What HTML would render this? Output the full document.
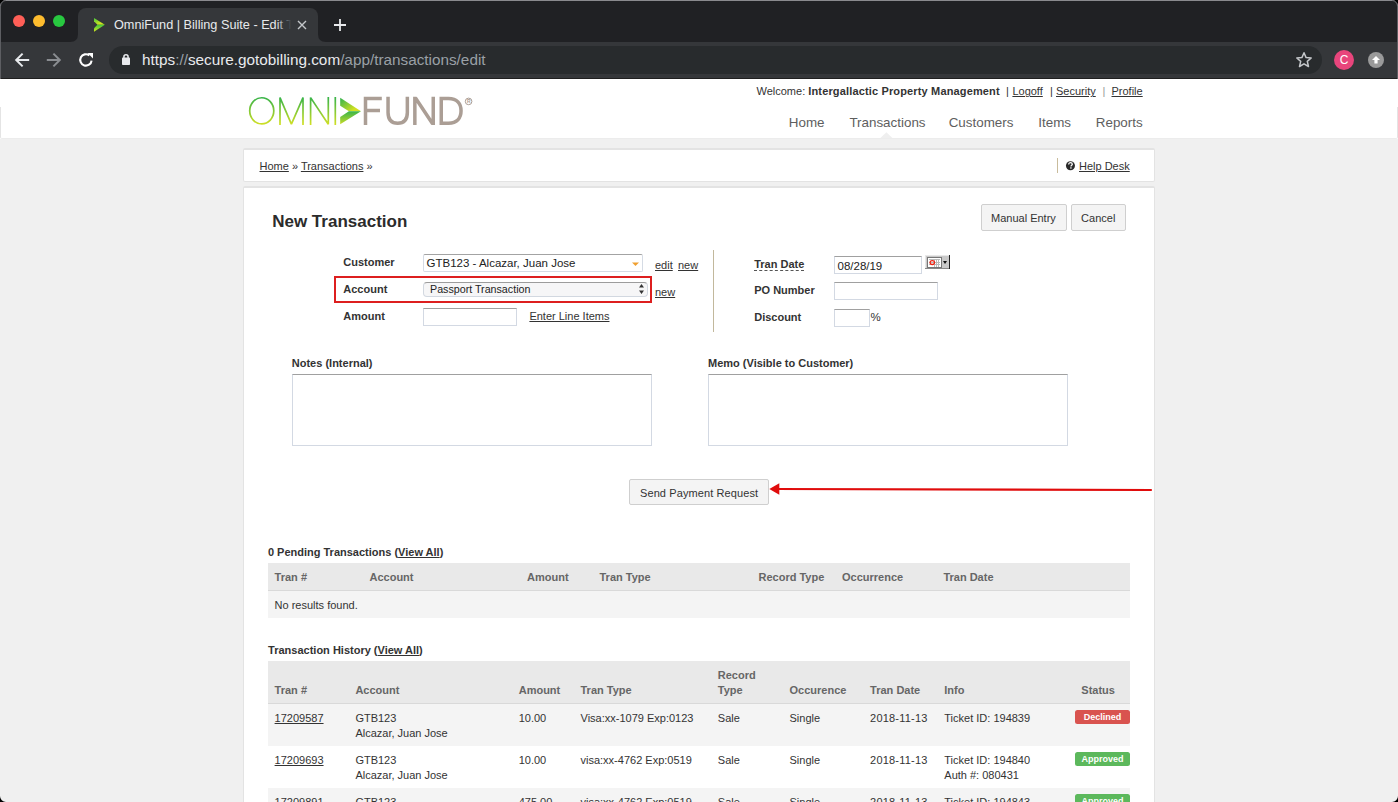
<!DOCTYPE html>
<html><head><meta charset="utf-8">
<style>
*{box-sizing:border-box;margin:0;padding:0}
html,body{width:1398px;height:802px;overflow:hidden;background:#f0f0f0;font-family:"Liberation Sans",sans-serif;font-size:11px;color:#333}
.a{position:absolute;white-space:nowrap}
#tabs{position:absolute;left:0;top:0;width:1398px;height:42px;background:#202124}
#tab{position:absolute;left:78px;top:8px;width:240px;height:34px;background:#35373a;border-radius:8px 8px 0 0}
#toolbar{position:absolute;left:0;top:42px;width:1398px;height:37px;background:#35373a;border-bottom:1px solid #1f1f1f}
#omni{position:absolute;left:109px;top:46px;width:1213px;height:28px;background:#282b2d;border-radius:14px}
#header{position:absolute;left:0;top:79px;width:1398px;height:60px;background:#fff}
.box{position:absolute;background:#fff;border:1px solid #e2e2e2;border-radius:2px}
u,.u{text-decoration:underline}
b{font-weight:bold}
.btn{position:absolute;background:#f4f4f4;border:1px solid #cfcfcf;border-radius:2px;text-align:center;color:#333}
.lbl{position:absolute;font-weight:bold;color:#333;white-space:nowrap}
.inp{position:absolute;background:#fff;border:1px solid #d3d9e3;border-top-color:#9a9a9a}
</style></head><body>
<!-- browser chrome -->
<div id="tabs"></div>

<div class="a" style="left:13px;top:15px;width:12px;height:12px;border-radius:50%;background:#ff5f57"></div>
<div class="a" style="left:33px;top:15px;width:12px;height:12px;border-radius:50%;background:#febc2e"></div>
<div class="a" style="left:53px;top:15px;width:12px;height:12px;border-radius:50%;background:#28c840"></div>
<div id="tab"></div>
<svg class="a" style="left:70px;top:34px" width="8" height="8"><path d="M0 8 Q8 8 8 0 V8Z" fill="#35373a"/></svg>
<svg class="a" style="left:318px;top:34px" width="8" height="8"><path d="M8 8 Q0 8 0 0 V8Z" fill="#35373a"/></svg>
<svg class="a" style="left:93px;top:17px" width="13" height="16" viewBox="0 0 13 16">
<defs><linearGradient id="fg1" gradientUnits="userSpaceOnUse" x1="1" y1="1" x2="5" y2="8"><stop offset="0" stop-color="#46c83c"/><stop offset="1" stop-color="#d2e41e"/></linearGradient>
<linearGradient id="fg2" gradientUnits="userSpaceOnUse" x1="0" y1="8" x2="0" y2="15"><stop offset="0" stop-color="#46c83c"/><stop offset="1" stop-color="#d7e81c"/></linearGradient></defs>
<path d="M1 1L11.85 7.8H4.4L1 4.3Z" fill="url(#fg1)"/><path d="M4.4 7.8H11.85L1 14.7V11.3Z" fill="url(#fg2)"/></svg>
<div class="a" style="left:114px;top:17px;font-size:12.7px;color:#e8eaed;width:178px;overflow:hidden;line-height:17px">OmniFund | Billing Suite - Edit Transaction</div>
<div class="a" style="left:276px;top:14px;width:18px;height:20px;background:linear-gradient(90deg,rgba(53,55,58,0),#35373a 85%)"></div>
<svg class="a" style="left:297px;top:20px" width="10" height="10"><path d="M1 1L9 9M9 1L1 9" stroke="#c4c7ca" stroke-width="1.4"/></svg>
<svg class="a" style="left:333px;top:18px" width="14" height="14"><path d="M7 1V13M1 7H13" stroke="#e8eaed" stroke-width="1.8"/></svg>
<div id="toolbar"></div>
<svg class="a" style="left:14px;top:52px" width="16" height="16" viewBox="0 0 16 16"><path d="M15.2 8H2.5M8.6 1.6L2.2 8L8.6 14.4" fill="none" stroke="#e8eaed" stroke-width="2"/></svg>
<svg class="a" style="left:46px;top:52px" width="16" height="16" viewBox="0 0 16 16"><path d="M0.8 8H13.5M7.4 1.6L13.8 8L7.4 14.4" fill="none" stroke="#8a8d91" stroke-width="2"/></svg>
<svg class="a" style="left:78px;top:52px" width="16" height="16" viewBox="0 0 16 16"><path d="M13.6 8.6A5.7 5.7 0 1 1 11.4 3.4" fill="none" stroke="#fff" stroke-width="2.1"/><path d="M9.6 1H15V6.4Z" fill="#fff"/></svg>
<div id="omni"></div>
<svg class="a" style="left:121px;top:53px" width="10" height="13" viewBox="0 0 10 13"><path d="M2.9 5V3.9A2.1 2.1 0 0 1 7.1 3.9V5" fill="none" stroke="#e8eaed" stroke-width="1.5"/><rect x="1" y="4.6" width="8" height="7.4" rx="0.8" fill="#e8eaed"/></svg>
<div class="a" style="left:142px;top:50px;font-size:15.3px;line-height:19px;color:#e8eaed">https<span style="color:#9aa0a6">://</span>secure.gotobilling.com<span style="color:#9aa0a6">/app/transactions/edit</span></div>
<svg class="a" style="left:1295px;top:51px" width="18" height="18" viewBox="0 0 18 18"><path d="M9 1.8L11.1 6.6L16.2 7L12.3 10.4L13.5 15.5L9 12.8L4.5 15.5L5.7 10.4L1.8 7L6.9 6.6Z" fill="none" stroke="#c4c7ca" stroke-width="1.5" stroke-linejoin="round"/></svg>
<div class="a" style="left:1334px;top:50px;width:20px;height:20px;border-radius:50%;background:#e8457c;color:#fff;font-size:12px;line-height:20px;text-align:center">C</div>
<div class="a" style="left:1368px;top:52px;width:16px;height:16px;border-radius:50%;background:#9a9a9a"></div>
<svg class="a" style="left:1370px;top:54px" width="12" height="12" viewBox="0 0 12 12"><path d="M6 2L10 6H7.6V9.5H4.4V6H2Z" fill="#fff"/></svg>

<div id="page">
<div class="a" style="left:0px;top:79px;width:1398px;height:60px;background:#fff"></div>
<div class="a" style="left:0px;top:107px;width:1398px;height:32px;border-left:1px solid #e4e4e4;border-right:1px solid #e4e4e4;border-bottom:1px solid #ececec;border-radius:0 0 2px 2px"></div>
<svg class="a" style="left:0;top:0" width="1398" height="140" viewBox="0 0 1398 140">
<defs><linearGradient id="lg" gradientUnits="userSpaceOnUse" x1="0" y1="97" x2="0" y2="125"><stop offset="0" stop-color="#36b34a"/><stop offset="1" stop-color="#d3e024"/></linearGradient>
<linearGradient id="la1" gradientUnits="userSpaceOnUse" x1="342" y1="98" x2="352" y2="111"><stop offset="0" stop-color="#3bb54a"/><stop offset="1" stop-color="#d2e021"/></linearGradient>
<linearGradient id="la2" gradientUnits="userSpaceOnUse" x1="0" y1="111.5" x2="0" y2="124.5"><stop offset="0" stop-color="#3bb54a"/><stop offset="1" stop-color="#c9dc25"/></linearGradient></defs>
<g fill="none" stroke="url(#lg)" stroke-width="1.7" stroke-linejoin="bevel">
<ellipse cx="261.75" cy="110.85" rx="12.05" ry="13.1"/>
<path d="M280 125V97.6L291.4 124.2L303 97.6V125"/>
<path d="M310.6 125V97.6L328.3 124.2V97"/>
<path d="M335.3 97V125"/>
</g>
<path d="M340.2 97.8L361 111.2H348.9L340.2 105.65Z" fill="url(#la1)"/>
<path d="M348.9 111.2H361L340.2 124.3V116.9Z" fill="url(#la2)"/>
<g fill="none" stroke="#ab9e95" stroke-width="3.5">
<path d="M365.5 125V98.45H381.8M365.5 110.6H380"/>
<path d="M388.05 96.7V112.5C388.05 120.5 392 123.2 397.7 123.2C403.4 123.2 407.35 120.5 407.35 112.5V96.7"/>
<path d="M414.85 125V96.7M433.25 125V96.7M415.5 98L432.6 123.8" stroke-linecap="butt"/>
<path d="M441.25 98.45V123.15H448.5C457 123.15 461.05 118 461.05 110.8C461.05 103.6 457 98.45 448.5 98.45Z"/>
</g>
<circle cx="468.6" cy="101.4" r="3.3" fill="none" stroke="#ab9e95" stroke-width="1"/>
<text x="466.9" y="103.4" font-family="Liberation Sans" font-size="5" font-weight="bold" fill="#ab9e95">R</text>
<path d="M880.4 138L886.4 132.2L892.4 138Z" fill="#efefef"/>
</svg>
<div class="a" style="left:756.5px;top:86.49px;font-size:11px;line-height:11px;color:#333;">Welcome: <b style="letter-spacing:0.15px">Intergallactic Property Management</b></div>
<div class="a" style="left:1006px;top:86.49px;font-size:11px;line-height:11px;color:#333;">|</div>
<div class="a" style="left:1012.4px;top:86.49px;font-size:11px;line-height:11px;color:#333;"><u>Logoff</u></div>
<div class="a" style="left:1050px;top:86.49px;font-size:11px;line-height:11px;color:#333;">|</div>
<div class="a" style="left:1056px;top:86.49px;font-size:11px;line-height:11px;color:#333;"><u>Security</u></div>
<div class="a" style="left:1102.5px;top:86.49px;font-size:11px;line-height:11px;color:#999;">|</div>
<div class="a" style="left:1111.5px;top:86.49px;font-size:11px;line-height:11px;color:#333;"><u>Profile</u></div>
<div class="a" style="left:788.8px;top:116.16px;font-size:13.4px;line-height:13.4px;color:#5e5e5e;">Home</div>
<div class="a" style="left:849.4px;top:116.16px;font-size:13.4px;line-height:13.4px;color:#5e5e5e;">Transactions</div>
<div class="a" style="left:948.7px;top:116.16px;font-size:13.4px;line-height:13.4px;color:#5e5e5e;">Customers</div>
<div class="a" style="left:1038.3px;top:116.16px;font-size:13.4px;line-height:13.4px;color:#5e5e5e;">Items</div>
<div class="a" style="left:1095.8px;top:116.16px;font-size:13.4px;line-height:13.4px;color:#5e5e5e;">Reports</div>
<div class="a" style="left:243px;top:148px;width:912px;height:34px;background:#fff;border:1px solid #e3e3e3;border-top:2px solid #e3e3e3;border-radius:2px"></div>
<div class="a" style="left:259.5px;top:161.19px;font-size:11px;line-height:11px;color:#333;"><u>Home</u> &raquo; <u>Transactions</u> &raquo;</div>
<div class="a" style="left:1057px;top:158px;width:1px;height:15px;background:#c9bc9c"></div>
<svg class="a" style="left:1065px;top:160px" width="11" height="12" viewBox="0 0 11 12"><circle cx="5.46" cy="5.75" r="4.5" fill="#2a2a2a"/><path d="M3.7 4.4C3.7 3.3 4.5 2.7 5.5 2.7C6.6 2.7 7.3 3.3 7.3 4.2C7.3 5.3 6 5.4 6 6.5" fill="none" stroke="#fff" stroke-width="1.3"/><rect x="5.2" y="7.3" width="1.4" height="1.3" fill="#fff"/></svg>
<div class="a" style="left:1079px;top:161.19px;font-size:11px;line-height:11px;color:#333;"><u>Help Desk</u></div>
<div class="a" style="left:243px;top:186px;width:912px;height:700px;background:#fff;border:1px solid #e3e3e3;border-top:2px solid #e3e3e3;border-radius:2px"></div>
<div class="a" style="left:272.2px;top:213.11px;font-size:17px;line-height:17px;color:#2b2b2b;font-weight:bold;">New Transaction</div>
<div class="a" style="left:981px;top:204px;width:85.5px;height:26.5px;background:#f4f4f4;border:1px solid #cfcfcf;border-radius:2px"></div>
<div class="a" style="left:991px;top:212.89px;font-size:11px;line-height:11px;color:#333;">Manual Entry</div>
<div class="a" style="left:1071px;top:204px;width:55px;height:26.5px;background:#f4f4f4;border:1px solid #cfcfcf;border-radius:2px"></div>
<div class="a" style="left:1081.1px;top:212.89px;font-size:11px;line-height:11px;color:#333;">Cancel</div>
<div class="a" style="left:343.3px;top:257.49px;font-size:11px;line-height:11px;color:#333;font-weight:bold;">Customer</div>
<div class="a" style="left:343.3px;top:284.09px;font-size:11px;line-height:11px;color:#333;font-weight:bold;">Account</div>
<div class="a" style="left:343.3px;top:311.19px;font-size:11px;line-height:11px;color:#333;font-weight:bold;">Amount</div>
<div class="a" style="left:423px;top:254px;width:220px;height:18px;background:#fff;border:1px solid #d5dbe4;border-top-color:#a3a3a3;border-radius:2px"></div>
<div class="a" style="left:426.5px;top:257.97px;font-size:11.5px;line-height:11.5px;color:#222;">GTB123 - Alcazar, Juan Jose</div>
<svg class="a" style="left:631px;top:261px" width="9" height="6"><path d="M1 1.5H8L4.5 5Z" fill="#f0a030"/></svg>
<div class="a" style="left:655px;top:260.19px;font-size:11px;line-height:11px;color:#333;"><u>edit</u></div>
<div class="a" style="left:678px;top:260.19px;font-size:11px;line-height:11px;color:#333;"><u>new</u></div>
<div class="a" style="left:333.5px;top:275.5px;width:318px;height:27px;border:2.2px solid #dd1f1f"></div>
<div class="a" style="left:423px;top:282px;width:225px;height:14.5px;background:#f6f6f7;border:1px solid #d2d8e0;border-top-color:#9c9c9c;border-radius:4px"></div>
<div class="a" style="left:430px;top:284.04px;font-size:10.7px;line-height:10.7px;color:#222;">Passport Transaction</div>
<svg class="a" style="left:638px;top:283px" width="7" height="12"><path d="M3.5 1L6 4.5H1Z M3.5 11L6 7.5H1Z" fill="#333"/></svg>
<div class="a" style="left:655px;top:287.19px;font-size:11px;line-height:11px;color:#333;"><u>new</u></div>
<div class="a" style="left:423px;top:308px;width:94px;height:18px;background:#fff;border:1px solid #d3d9e3;border-top-color:#a0a0a0"></div>
<div class="a" style="left:529.4px;top:311.19px;font-size:11px;line-height:11px;color:#333;"><u>Enter Line Items</u></div>
<div class="a" style="left:713px;top:250px;width:1px;height:82px;background:#c2b89c"></div>
<div class="a" style="left:754.2px;top:258.99px;font-size:11px;line-height:11px;color:#333;font-weight:bold;"><span style="border-bottom:1px dashed #555">Tran Date</span></div>
<div class="a" style="left:754.2px;top:284.99px;font-size:11px;line-height:11px;color:#333;font-weight:bold;">PO Number</div>
<div class="a" style="left:754.2px;top:311.69px;font-size:11px;line-height:11px;color:#333;font-weight:bold;">Discount</div>
<div class="a" style="left:834px;top:256px;width:88px;height:18px;background:#fff;border:1px solid #d3d9e3;border-top-color:#a0a0a0"></div>
<div class="a" style="left:837.5px;top:260.97px;font-size:11.5px;line-height:11.5px;color:#222;">08/28/19</div>
<svg class="a" style="left:925px;top:255px" width="25" height="14" viewBox="0 0 25 14">
<rect x="0" y="0" width="25" height="14" fill="#c9c9c9"/>
<rect x="0" y="0" width="24" height="1" fill="#e8e8e8"/><rect x="0" y="0" width="1" height="13" fill="#e8e8e8"/>
<rect x="0" y="13" width="25" height="1" fill="#888"/><rect x="24" y="0" width="1" height="14" fill="#222"/>
<rect x="2.5" y="2.5" width="14" height="10" fill="#fff" stroke="#777" stroke-width="1"/>
<g fill="#bbb"><rect x="4" y="4" width="11" height="1"/><rect x="9" y="5" width="1" height="7"/><rect x="11" y="5" width="1" height="7"/><rect x="13" y="5" width="1" height="7"/><rect x="4" y="7" width="11" height="1"/><rect x="4" y="9" width="11" height="1"/></g>
<ellipse cx="7.3" cy="7.6" rx="2.2" ry="1.9" fill="none" stroke="#e21" stroke-width="1.3"/>
<path d="M18 6H22L20 9Z" fill="#111"/></svg>
<div class="a" style="left:834px;top:282px;width:104px;height:18px;background:#fff;border:1px solid #d3d9e3;border-top-color:#a0a0a0"></div>
<div class="a" style="left:834px;top:308.7px;width:36px;height:18px;background:#fff;border:1px solid #d3d9e3;border-top-color:#a0a0a0"></div>
<div class="a" style="left:870.5px;top:311.77px;font-size:11.5px;line-height:11.5px;color:#333;">%</div>
<div class="a" style="left:291.8px;top:357.99px;font-size:11px;line-height:11px;color:#333;font-weight:bold;">Notes (Internal)</div>
<div class="a" style="left:292px;top:374px;width:360px;height:72px;background:#fff;border:1px solid #d3d9e3;border-top-color:#a0a0a0"></div>
<div class="a" style="left:708px;top:357.99px;font-size:11px;line-height:11px;color:#333;font-weight:bold;">Memo (Visible to Customer)</div>
<div class="a" style="left:708px;top:374px;width:360px;height:72px;background:#fff;border:1px solid #d3d9e3;border-top-color:#a0a0a0"></div>
<div class="a" style="left:629px;top:479px;width:140px;height:26px;background:#f4f4f4;border:1px solid #cfcfcf;border-radius:2px"></div>
<div class="a" style="left:640px;top:487.99px;font-size:11px;line-height:11px;color:#333;letter-spacing:0.1px;">Send Payment Request</div>
<svg class="a" style="left:760px;top:480px" width="400" height="20"><path d="M15 9L391 10" stroke="#e00c0c" stroke-width="2.2" stroke-linecap="round"/><path d="M9.3 9L19.3 3.3V14.7Z" fill="#e00c0c"/></svg>
<div class="a" style="left:267.9px;top:547.19px;font-size:11px;line-height:11px;color:#333;font-weight:bold;">0 Pending Transactions (<u>View All</u>)</div>
<div class="a" style="left:268px;top:563px;width:862px;height:27px;background:#e9e9e9"></div>
<div class="a" style="left:268px;top:590px;width:862px;height:1px;background:#d9d9d9"></div>
<div class="a" style="left:268px;top:591px;width:862px;height:27px;background:#f4f4f4"></div>
<div class="a" style="left:274.6px;top:571.99px;font-size:11px;line-height:11px;color:#666;font-weight:bold;">Tran #</div>
<div class="a" style="left:369.5px;top:571.99px;font-size:11px;line-height:11px;color:#666;font-weight:bold;">Account</div>
<div class="a" style="left:527px;top:571.99px;font-size:11px;line-height:11px;color:#666;font-weight:bold;">Amount</div>
<div class="a" style="left:599.5px;top:571.99px;font-size:11px;line-height:11px;color:#666;font-weight:bold;">Tran Type</div>
<div class="a" style="left:758.5px;top:571.99px;font-size:11px;line-height:11px;color:#666;font-weight:bold;">Record Type</div>
<div class="a" style="left:842px;top:571.99px;font-size:11px;line-height:11px;color:#666;font-weight:bold;">Occurrence</div>
<div class="a" style="left:943.4px;top:571.99px;font-size:11px;line-height:11px;color:#666;font-weight:bold;">Tran Date</div>
<div class="a" style="left:274.6px;top:599.89px;font-size:11px;line-height:11px;color:#333;">No results found.</div>
<div class="a" style="left:268.1px;top:645.39px;font-size:11px;line-height:11px;color:#333;font-weight:bold;">Transaction History (<u>View All</u>)</div>
<div class="a" style="left:268px;top:661px;width:862px;height:42px;background:#e9e9e9"></div>
<div class="a" style="left:268px;top:703px;width:862px;height:1px;background:#d9d9d9"></div>
<div class="a" style="left:268px;top:704px;width:862px;height:42px;background:#f4f4f4"></div>
<div class="a" style="left:268px;top:746px;width:862px;height:42px;background:#fff"></div>
<div class="a" style="left:268px;top:788px;width:862px;height:20px;background:#f4f4f4"></div>
<div class="a" style="left:274.6px;top:685.09px;font-size:11px;line-height:11px;color:#666;font-weight:bold;">Tran #</div>
<div class="a" style="left:355.4px;top:685.09px;font-size:11px;line-height:11px;color:#666;font-weight:bold;">Account</div>
<div class="a" style="left:518.7px;top:685.09px;font-size:11px;line-height:11px;color:#666;font-weight:bold;">Amount</div>
<div class="a" style="left:580.5px;top:685.09px;font-size:11px;line-height:11px;color:#666;font-weight:bold;">Tran Type</div>
<div class="a" style="left:789.5px;top:685.09px;font-size:11px;line-height:11px;color:#666;font-weight:bold;">Occurence</div>
<div class="a" style="left:870.1px;top:685.09px;font-size:11px;line-height:11px;color:#666;font-weight:bold;">Tran Date</div>
<div class="a" style="left:944.3px;top:685.09px;font-size:11px;line-height:11px;color:#666;font-weight:bold;">Info</div>
<div class="a" style="left:1081.3px;top:685.09px;font-size:11px;line-height:11px;color:#666;font-weight:bold;">Status</div>
<div class="a" style="left:717.8px;top:670.09px;font-size:11px;line-height:11px;color:#666;font-weight:bold;">Record</div>
<div class="a" style="left:717.8px;top:685.09px;font-size:11px;line-height:11px;color:#666;font-weight:bold;">Type</div>
<div class="a" style="left:274.6px;top:712.99px;font-size:11px;line-height:11px;color:#333;"><u>17209587</u></div>
<div class="a" style="left:355.4px;top:712.99px;font-size:11px;line-height:11px;color:#333;">GTB123</div>
<div class="a" style="left:355.4px;top:727.99px;font-size:11px;line-height:11px;color:#333;">Alcazar, Juan Jose</div>
<div class="a" style="left:518.7px;top:712.99px;font-size:11px;line-height:11px;color:#333;">10.00</div>
<div class="a" style="left:580.5px;top:712.99px;font-size:11px;line-height:11px;color:#333;">Visa:xx-1079 Exp:0123</div>
<div class="a" style="left:717.8px;top:712.99px;font-size:11px;line-height:11px;color:#333;">Sale</div>
<div class="a" style="left:789.5px;top:712.99px;font-size:11px;line-height:11px;color:#333;">Single</div>
<div class="a" style="left:870.1px;top:712.99px;font-size:11px;line-height:11px;color:#333;letter-spacing:0.2px;">2018-11-13</div>
<div class="a" style="left:944.3px;top:712.99px;font-size:11px;line-height:11px;color:#333;">Ticket ID: 194839</div>
<div class="a" style="left:1075px;top:710.20px;width:55px;height:13.7px;border-radius:2.5px;background:#d9534f;color:#fff;font-weight:bold;font-size:9px;line-height:13.7px;padding-top:1px;text-align:center">Declined</div>
<div class="a" style="left:274.6px;top:755.19px;font-size:11px;line-height:11px;color:#333;"><u>17209693</u></div>
<div class="a" style="left:355.4px;top:755.19px;font-size:11px;line-height:11px;color:#333;">GTB123</div>
<div class="a" style="left:355.4px;top:770.19px;font-size:11px;line-height:11px;color:#333;">Alcazar, Juan Jose</div>
<div class="a" style="left:518.7px;top:755.19px;font-size:11px;line-height:11px;color:#333;">10.00</div>
<div class="a" style="left:580.5px;top:755.19px;font-size:11px;line-height:11px;color:#333;">visa:xx-4762 Exp:0519</div>
<div class="a" style="left:717.8px;top:755.19px;font-size:11px;line-height:11px;color:#333;">Sale</div>
<div class="a" style="left:789.5px;top:755.19px;font-size:11px;line-height:11px;color:#333;">Single</div>
<div class="a" style="left:870.1px;top:755.19px;font-size:11px;line-height:11px;color:#333;letter-spacing:0.2px;">2018-11-13</div>
<div class="a" style="left:944.3px;top:755.19px;font-size:11px;line-height:11px;color:#333;">Ticket ID: 194840</div>
<div class="a" style="left:944.3px;top:770.19px;font-size:11px;line-height:11px;color:#333;">Auth #: 080431</div>
<div class="a" style="left:1075px;top:752.40px;width:55px;height:13.7px;border-radius:2.5px;background:#5cb85c;color:#fff;font-weight:bold;font-size:9px;line-height:13.7px;padding-top:1px;text-align:center">Approved</div>
<div class="a" style="left:274.6px;top:797.19px;font-size:11px;line-height:11px;color:#333;"><u>17209891</u></div>
<div class="a" style="left:355.4px;top:797.19px;font-size:11px;line-height:11px;color:#333;">GTB123</div>
<div class="a" style="left:355.4px;top:812.19px;font-size:11px;line-height:11px;color:#333;">Alcazar, Juan Jose</div>
<div class="a" style="left:518.7px;top:797.19px;font-size:11px;line-height:11px;color:#333;">475.00</div>
<div class="a" style="left:580.5px;top:797.19px;font-size:11px;line-height:11px;color:#333;">visa:xx-4762 Exp:0519</div>
<div class="a" style="left:717.8px;top:797.19px;font-size:11px;line-height:11px;color:#333;">Sale</div>
<div class="a" style="left:789.5px;top:797.19px;font-size:11px;line-height:11px;color:#333;">Single</div>
<div class="a" style="left:870.1px;top:797.19px;font-size:11px;line-height:11px;color:#333;letter-spacing:0.2px;">2018-11-13</div>
<div class="a" style="left:944.3px;top:797.19px;font-size:11px;line-height:11px;color:#333;">Ticket ID: 194843</div>
<div class="a" style="left:1075px;top:794.40px;width:55px;height:13.7px;border-radius:2.5px;background:#5cb85c;color:#fff;font-weight:bold;font-size:9px;line-height:13.7px;padding-top:1px;text-align:center">Approved</div>
<div class="a" style="left:0px;top:0px;width:1398px;height:1px;background:#8a8a8e"></div>
<div class="a" style="left:0px;top:1px;width:1px;height:78px;background:#5d5e62"></div>
<div class="a" style="left:1397px;top:1px;width:1px;height:78px;background:#5d5e62"></div>
<svg class="a" style="left:0;top:0" width="6" height="6"><path d="M0 0H6A6 6 0 0 0 0 6Z" fill="#000"/><path d="M0.5 6A5.5 5.5 0 0 1 6 0.5" fill="none" stroke="#6f6f73" stroke-width="1"/></svg>
<svg class="a" style="left:1392px;top:0" width="6" height="6"><path d="M6 0H0A6 6 0 0 1 6 6Z" fill="#000"/><path d="M0 0.5A5.5 5.5 0 0 1 5.5 6" fill="none" stroke="#6f6f73" stroke-width="1"/></svg>
<svg class="a" style="left:0;top:796px" width="6" height="6"><path d="M0 6H6A6 6 0 0 1 0 0Z" fill="#000"/></svg>
<svg class="a" style="left:1392px;top:796px" width="6" height="6"><path d="M6 6H0A6 6 0 0 0 6 0Z" fill="#000"/></svg>
</div>
</body></html>
